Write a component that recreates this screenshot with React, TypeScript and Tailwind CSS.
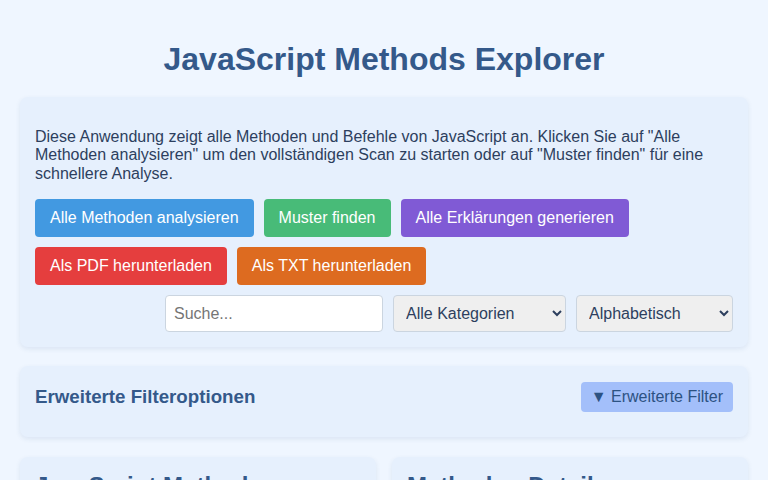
import { useState } from 'react';

const ACTIONS = [
  { label: 'Alle Methoden analysieren', color: 'bg-[#4299e1]' },
  { label: 'Muster finden', color: 'bg-[#48bb78]' },
  { label: 'Alle Erklärungen generieren', color: 'bg-[#805ad5]' },
  { label: 'Als PDF herunterladen', color: 'bg-[#e53e3e]' },
  { label: 'Als TXT herunterladen', color: 'bg-[#dd6b20]' },
];

export default function App() {
  const [query, setQuery] = useState('');

  return (
    <div className="min-h-screen bg-[#eff6ff] px-5 pt-5 pb-5 font-['Liberation_Sans',Arial,sans-serif] text-[#2d3748]">
      <h1 className="mt-[21px] mb-[19px] text-center text-[32px] font-bold leading-[normal] text-[#34598a]">
        JavaScript Methods Explorer
      </h1>

      {/* Intro + actions */}
      <div className="rounded-lg bg-[#e6f0fd] p-[15px] shadow-[0_2px_5px_rgba(40,80,140,0.1)]">
        <p className="my-4 text-base leading-[18.4px] text-[#2d3f5e]">
          Diese Anwendung zeigt alle Methoden und Befehle von JavaScript an. Klicken Sie auf "Alle Methoden
          analysieren" um den vollständigen Scan zu starten oder auf "Muster finden" für eine schnellere Analyse.
        </p>
        <div className="flex flex-wrap gap-[10px]">
          {ACTIONS.map((a) => (
            <button
              key={a.label}
              className={`${a.color} rounded px-[15px] py-[10px] text-base leading-[18px] text-white`}
            >
              {a.label}
            </button>
          ))}
        </div>
        <div className="mt-[10px] flex justify-end gap-[10px]">
          <input
            value={query}
            onChange={(e) => setQuery(e.target.value)}
            placeholder="Suche..."
            className="h-[37px] w-[218px] rounded border border-[#cbd5e0] bg-white px-2 text-base text-[#2d3748] placeholder:text-[#757575] focus:outline-none"
          />
          <select className="h-[37px] w-[173px] rounded border border-[#cbd5e0] bg-[#efefef] px-2 text-base text-[#2d3f5e]">
            <option>Alle Kategorien</option>
          </select>
          <select className="h-[37px] w-[157px] rounded border border-[#cbd5e0] bg-[#efefef] px-2 text-base text-[#2d3f5e]">
            <option>Alphabetisch</option>
          </select>
        </div>
      </div>

      {/* Advanced filters */}
      <div className="mt-[19px] rounded-lg bg-[#e6f0fd] px-[15px] pt-[16px] pb-[25px] shadow-[0_2px_5px_rgba(40,80,140,0.1)]">
        <div className="flex items-center justify-between">
          <h3 className="text-[18.72px] font-bold leading-[normal] text-[#34598a]">Erweiterte Filteroptionen</h3>
          <button className="h-[30px] rounded bg-[#a3bffa] px-[10px] text-base leading-[18px] text-[#2c5282]">
            ▼ Erweiterte Filter
          </button>
        </div>
      </div>

      {/* Lists */}
      <div className="mt-5 grid grid-cols-2 gap-4">
        <div className="h-[200px] rounded-lg bg-[#e6f0fd] p-[15px] shadow-[0_2px_5px_rgba(40,80,140,0.1)]">
          <h2 className="text-2xl font-bold leading-[normal] text-[#34598a]">JavaScript Methoden</h2>
        </div>
        <div className="h-[200px] rounded-lg bg-[#e6f0fd] p-[15px] shadow-[0_2px_5px_rgba(40,80,140,0.1)]">
          <h2 className="text-2xl font-bold leading-[normal] text-[#34598a]">Methoden-Details</h2>
        </div>
      </div>
    </div>
  );
}
